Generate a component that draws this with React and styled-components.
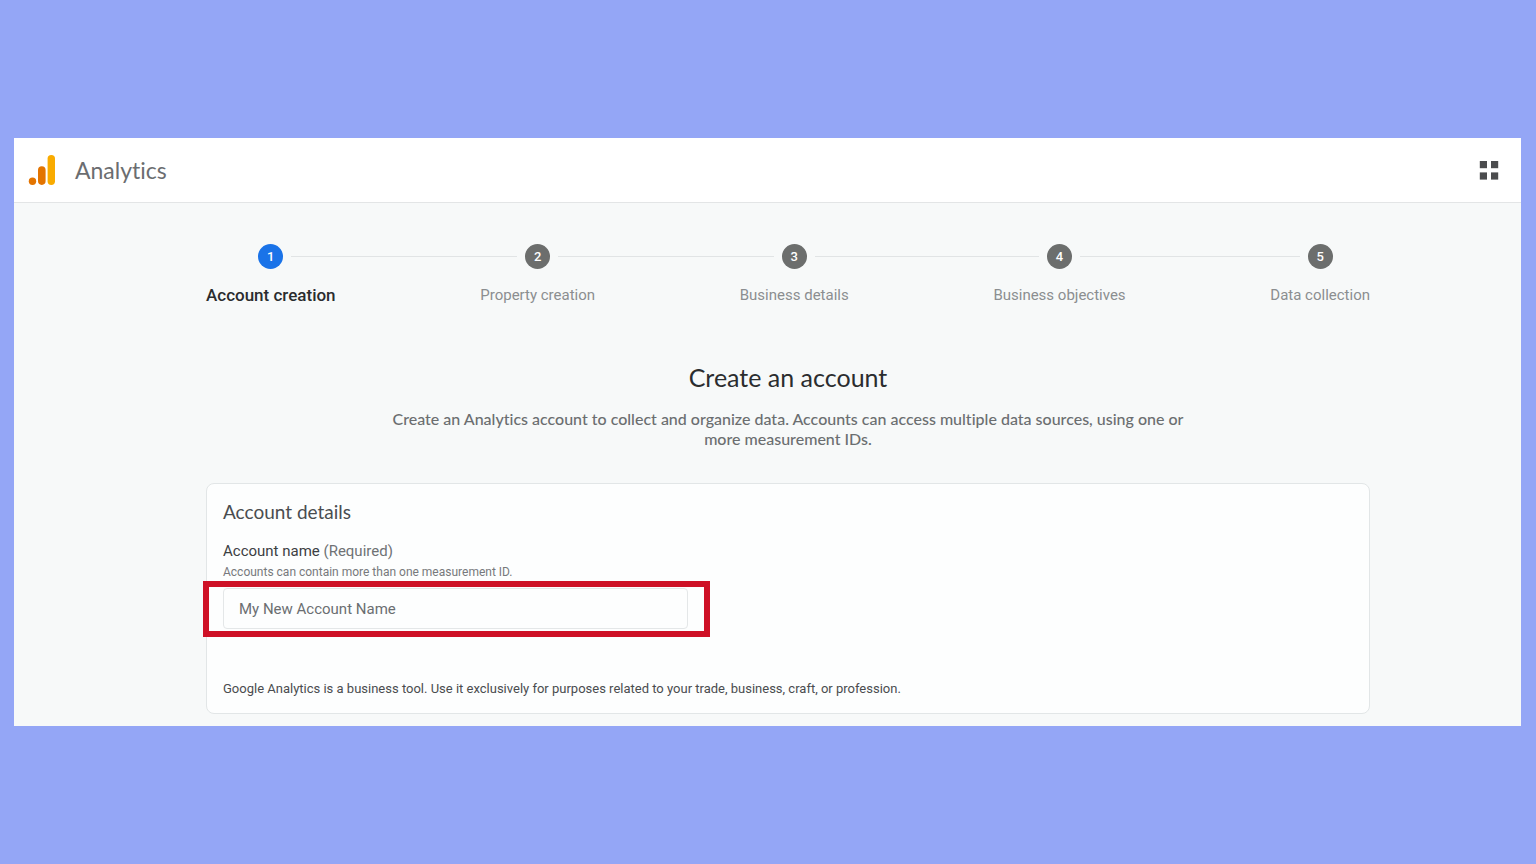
import React, { Fragment } from "react";
import styled, { createGlobalStyle, css } from "styled-components";

const display = css`
  font-family: "Lato", "Roboto", sans-serif;
  font-variant-ligatures: none;
`;

const GlobalStyle = createGlobalStyle`
  *, *::before, *::after { box-sizing: border-box; }
  body {
    margin: 0;
    background: #94a6f6;
    font-family: "Roboto", "Liberation Sans", sans-serif;
    color: #3c4043;
  }
  h1, h2, p, ol { margin: 0; padding: 0; }
`;

const Page = styled.div`
  min-height: 100vh;
  display: flex;
  flex-direction: column;
  justify-content: center;
  padding: 24px 15px 24px 14px;
`;

const Panel = styled.div`
  background: #f7f9f9;
`;

const Header = styled.header`
  display: flex;
  align-items: center;
  justify-content: space-between;
  height: 65px;
  padding: 0 14px;
  background: #fff;
  border-bottom: 1px solid #e3e5e6;
`;

const Brand = styled.a`
  ${display}
  display: flex;
  align-items: center;
  gap: 20px;
  font-size: 23px;
  line-height: 32px;
  color: #6b6d70;
  text-decoration: none;
`;

const AppsButton = styled.button`
  display: flex;
  padding: 8px;
  border: 0;
  background: none;
  color: #4b4c4e;
  cursor: pointer;
`;

const Main = styled.main`
  display: flex;
  flex-direction: column;
  padding: 40px 151px 12px 192px;
`;

const Stepper = styled.ol`
  display: flex;
  list-style: none;
`;

const Step = styled.li`
  display: flex;
  flex-direction: column;
  gap: 16px;
`;

const Marker = styled.div`
  display: flex;
  align-items: center;
  gap: 8px;
  height: 26px;
`;

const Line = styled.span`
  flex: 1;
  height: 1px;
  background: ${(p) => (p.$hidden ? "transparent" : "#e1e4e5")};
`;

const Connector = styled(Line).attrs({ as: "li", "aria-hidden": true })`
  margin-top: 13px;
`;

const Circle = styled.span`
  display: flex;
  align-items: center;
  justify-content: center;
  width: 25px;
  height: 25px;
  border-radius: 50%;
  background: ${(p) => (p.$active ? "#1a73e8" : "#6c6e6d")};
  color: #fff;
  font-size: 13px;
  font-weight: 500;
`;

const StepLabel = styled.span`
  font-size: ${(p) => (p.$active ? 17 : 15)}px;
  line-height: 20px;
  font-weight: ${(p) => (p.$active ? 500 : 400)};
  color: ${(p) => (p.$active ? "#2a2c2e" : "#8b8e90")};
  white-space: nowrap;
`;

const Title = styled.h1`
  ${display}
  margin-top: 56px;
  font-size: 25px;
  line-height: 32px;
  font-weight: 400;
  text-align: center;
  color: #2b2d2f;
`;

const Intro = styled.p`
  ${display}
  align-self: center;
  max-width: 800px;
  margin-top: 16px;
  font-size: 16px;
  line-height: 20px;
  font-weight: 500;
  text-align: center;
  color: #6b6e70;
`;

const Card = styled.section`
  margin-top: 34px;
  padding: 16px;
  background: #fdfefe;
  border: 1px solid #e2e6e7;
  border-radius: 8px;
`;

const CardTitle = styled.h2`
  ${display}
  font-size: 19px;
  line-height: 24px;
  font-weight: 400;
  color: #4a4d50;
`;

const Label = styled.label`
  display: block;
  margin-top: 17px;
  font-size: 15px;
  line-height: 20px;
  color: #3c4043;
`;

const Required = styled.span`
  color: #6f7275;
`;

const Hint = styled.p`
  margin-top: 3px;
  font-size: 12px;
  line-height: 16px;
  color: #77797c;
`;

const Field = styled.div`
  position: relative;
  max-width: 465px;
  margin-top: 8px;

  &::after {
    content: "";
    position: absolute;
    inset: -7px -22px -8px -20px;
    border: 6px solid #ce1126;
    pointer-events: none;
  }
`;

const Input = styled.input`
  display: block;
  width: 100%;
  height: 41px;
  padding: 0 15px;
  border: 1px solid #e4e7e8;
  border-radius: 4px;
  background: transparent;
  font: inherit;
  font-size: 15px;
  color: #3c4043;

  &::placeholder {
    color: #6b6e71;
    opacity: 1;
  }
`;

const Notice = styled.p`
  margin-top: 52px;
  font-size: 13px;
  line-height: 16px;
  color: #4a4c4f;
`;

const steps = [
  "Account creation",
  "Property creation",
  "Business details",
  "Business objectives",
  "Data collection",
];

function AnalyticsLogo() {
  return (
    <svg width="27" height="32" viewBox="0 0 27 32" aria-hidden="true">
      <circle cx="4.5" cy="27.3" r="3.7" fill="#e37400" />
      <rect x="10" y="12.3" width="7.6" height="18.6" rx="3.8" fill="#e37400" />
      <rect x="19.6" y="0.9" width="7.4" height="30" rx="3.7" fill="#f9ab00" />
    </svg>
  );
}

function GridIcon() {
  return (
    <svg width="20" height="20" viewBox="0 0 20 20" fill="currentColor" aria-hidden="true">
      <rect x="0.8" y="1" width="7.2" height="7.2" />
      <rect x="12" y="1" width="7.2" height="7.2" />
      <rect x="0.8" y="12.4" width="7.2" height="7.2" />
      <rect x="12" y="12.4" width="7.2" height="7.2" />
    </svg>
  );
}

export default function App() {
  return (
    <Page>
      <GlobalStyle />
      <Panel>
        <Header>
          <Brand href="#">
            <AnalyticsLogo />
            Analytics
          </Brand>
          <AppsButton type="button" aria-label="Apps">
            <GridIcon />
          </AppsButton>
        </Header>
        <Main>
          <Stepper>
            {steps.map((label, i) => (
              <Fragment key={label}>
                {i > 0 && <Connector />}
                <Step aria-current={i === 0 ? "step" : undefined}>
                  <Marker>
                    <Line $hidden={i === 0} />
                    <Circle $active={i === 0}>{i + 1}</Circle>
                    <Line $hidden={i === steps.length - 1} />
                  </Marker>
                  <StepLabel $active={i === 0}>{label}</StepLabel>
                </Step>
              </Fragment>
            ))}
          </Stepper>
          <Title>Create an account</Title>
          <Intro>
            Create an Analytics account to collect and organize data. Accounts can access
            multiple data sources, using one or more measurement IDs.
          </Intro>
          <Card>
            <CardTitle>Account details</CardTitle>
            <Label htmlFor="account-name">
              Account name <Required>(Required)</Required>
            </Label>
            <Hint id="account-hint">Accounts can contain more than one measurement ID.</Hint>
            <Field>
              <Input
                id="account-name"
                type="text"
                placeholder="My New Account Name"
                aria-describedby="account-hint"
              />
            </Field>
            <Notice>
              Google Analytics is a business tool. Use it exclusively for purposes related to
              your trade, business, craft, or profession.
            </Notice>
          </Card>
        </Main>
      </Panel>
    </Page>
  );
}
